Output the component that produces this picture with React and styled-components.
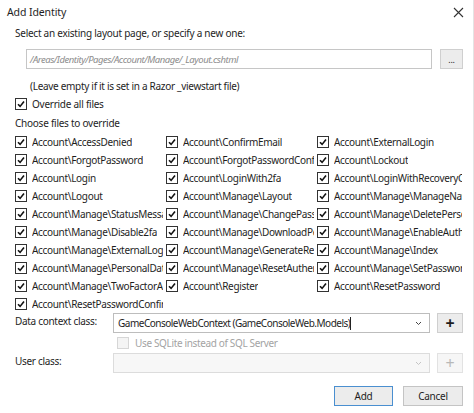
import styled, { createGlobalStyle } from 'styled-components'

const GlobalStyle = createGlobalStyle`
  html, body {
    margin: 0;
    padding: 0;
    background: #ffffff;
  }
  body {
    font-family: "Noto Sans", "Open Sans", sans-serif;
    font-size: 10px;
    letter-spacing: -0.25px;
    color: #1e1e1e;
  }
`

const files = [
  'Account\\AccessDenied', 'Account\\ConfirmEmail', 'Account\\ExternalLogin',
  'Account\\ForgotPassword', 'Account\\ForgotPasswordConfirmation', 'Account\\Lockout',
  'Account\\Login', 'Account\\LoginWith2fa', 'Account\\LoginWithRecoveryCode',
  'Account\\Logout', 'Account\\Manage\\Layout', 'Account\\Manage\\ManageNav',
  'Account\\Manage\\StatusMessage', 'Account\\Manage\\ChangePassword', 'Account\\Manage\\DeletePersonalData',
  'Account\\Manage\\Disable2fa', 'Account\\Manage\\DownloadPersonalData', 'Account\\Manage\\EnableAuthenticator',
  'Account\\Manage\\ExternalLogins', 'Account\\Manage\\GenerateRecoveryCodes', 'Account\\Manage\\Index',
  'Account\\Manage\\PersonalData', 'Account\\Manage\\ResetAuthenticator', 'Account\\Manage\\SetPassword',
  'Account\\Manage\\TwoFactorAuthentication', 'Account\\Register', 'Account\\ResetPassword',
  'Account\\ResetPasswordConfirmation',
]

function CheckBox({ checked, disabled }) {
  return (
    <Box $disabled={disabled}>
      {checked && (
        <svg width="10" height="10" viewBox="0 0 10 10">
          <path d="M2 5.2 L4.1 7.4 L8 2.4" fill="none" stroke="#111" strokeWidth="1.6" />
        </svg>
      )}
    </Box>
  )
}

function Chevron({ disabled }) {
  return (
    <svg width="7" height="5" viewBox="0 0 7 5">
      <path d="M1 1 L3.5 3.5 L6 1" fill="none" stroke={disabled ? '#c4c4c4' : '#444'} strokeWidth="1" />
    </svg>
  )
}

export default function App() {
  return (
    <>
      <GlobalStyle />
      <Dialog>
        <TitleBar>
          <Title>Add Identity</Title>
          <svg width="11" height="11" viewBox="0 0 11 11">
            <path d="M1 1 L10 10 M10 1 L1 10" stroke="#333" strokeWidth="1.1" />
          </svg>
        </TitleBar>
        <Body>
          <Label $top={1}>Select an existing layout page, or specify a new one:</Label>
          <InputRow>
            <TextInput>
              <Placeholder>/Areas/Identity/Pages/Account/Manage/_Layout.cshtml</Placeholder>
            </TextInput>
            <SmallButton $width={23}>...</SmallButton>
          </InputRow>
          <Hint>(Leave empty if it is set in a Razor _viewstart file)</Hint>
          <CheckRow $top={2}>
            <CheckBox checked />
            <span>Override all files</span>
          </CheckRow>
          <Label $top={3}>Choose files to override</Label>
          <FileGrid>
            {files.map((f) => (
              <FileItem key={f}>
                <CheckBox checked />
                <FileName>{f}</FileName>
              </FileItem>
            ))}
          </FileGrid>
          <FieldRow>
            <FieldLabel>Data context class:</FieldLabel>
            <Select>
              <SelectText>
                GameConsoleWebContext (GameConsoleWeb.Models)<Caret />
              </SelectText>
              <Chevron />
            </Select>
            <SmallButton $width={26} $bold>+</SmallButton>
          </FieldRow>
          <SqliteRow>
            <CheckBox disabled />
            <span>Use SQLite instead of SQL Server</span>
          </SqliteRow>
          <FieldRow $top={2}>
            <FieldLabel>User class:</FieldLabel>
            <Select $disabled>
              <SelectText />
              <Chevron disabled />
            </Select>
            <SmallButton $width={26} $bold $disabled>+</SmallButton>
          </FieldRow>
          <Footer>
            <DialogButton $primary>Add</DialogButton>
            <DialogButton>Cancel</DialogButton>
          </Footer>
        </Body>
      </Dialog>
    </>
  )
}

const Dialog = styled.div`
  width: 474px;
  height: 413px;
  box-sizing: border-box;
  border-right: 1px solid #e4e4e4;
  background: #fff;
  overflow: hidden;
`

const TitleBar = styled.div`
  height: 24px;
  display: flex;
  align-items: center;
  justify-content: space-between;
  padding: 0 9px 0 7px;
`

const Title = styled.span`
  font-size: 10.5px;
  letter-spacing: -0.1px;
  color: #1e1e1e;
`

const Body = styled.div`
  padding: 0 10px 0 15px;
`

const Label = styled.div`
  line-height: 16px;
  margin-top: ${(p) => p.$top || 0}px;
`

const InputRow = styled.div`
  display: flex;
  gap: 8px;
  margin-top: 8px;
  padding-left: 11px;
  height: 20px;
`

const TextInput = styled.div`
  flex: 1;
  border: 1px solid #c6c6c6;
  display: flex;
  align-items: center;
  padding-left: 3px;
`

const Placeholder = styled.span`
  font-style: italic;
  font-size: 9.5px;
  color: #8c8c8c;
  letter-spacing: -0.45px;
`

const SmallButton = styled.div`
  width: ${(p) => p.$width}px;
  box-sizing: border-box;
  height: 20px;
  border: 1px solid ${(p) => (p.$disabled ? '#e2e2e2' : '#cfcfcf')};
  background: ${(p) => (p.$disabled ? '#f6f6f6' : '#ececec')};
  color: ${(p) => (p.$disabled ? '#b8b8b8' : '#1e1e1e')};
  display: flex;
  align-items: center;
  justify-content: center;
  font-size: ${(p) => (p.$bold ? '16px' : '9px')};
  font-weight: ${(p) => (p.$bold && !p.$disabled ? 700 : 400)};
`

const Hint = styled.div`
  line-height: 16px;
  margin-top: 9px;
  padding-left: 15px;
  letter-spacing: -0.3px;
`

const CheckRow = styled.div`
  display: flex;
  align-items: center;
  gap: 5px;
  height: 16px;
  margin-top: ${(p) => p.$top || 0}px;
`

const Box = styled.span`
  width: 12px;
  height: 12px;
  box-sizing: border-box;
  flex: none;
  border: 1px solid ${(p) => (p.$disabled ? '#d6d6d6' : '#333')};
  background: ${(p) => (p.$disabled ? '#f4f4f4' : '#fff')};
  display: flex;
  align-items: center;
  justify-content: center;
`

const FileGrid = styled.div`
  display: grid;
  grid-template-columns: 151px 151px 148px;
  grid-auto-rows: 18px;
  margin-top: 2px;
`

const FileItem = styled.div`
  display: flex;
  align-items: center;
  gap: 5px;
  overflow: hidden;
  padding-right: 3px;
`

const FileName = styled.span`
  white-space: nowrap;
  overflow: hidden;
  letter-spacing: -0.32px;
`

const FieldRow = styled.div`
  display: flex;
  align-items: center;
  gap: 7px;
  height: 20px;
  margin-top: ${(p) => p.$top || 0}px;
`

const FieldLabel = styled.span`
  width: 91px;
  flex: none;
  align-self: flex-start;
  line-height: 16px;
  white-space: nowrap;
  letter-spacing: -0.3px;
`

const Select = styled.div`
  flex: 1;
  height: 20px;
  box-sizing: border-box;
  border: 1px solid ${(p) => (p.$disabled ? '#dcdcdc' : '#bdbdbd')};
  background: ${(p) => (p.$disabled ? '#f7f7f7' : '#fff')};
  display: flex;
  align-items: center;
  justify-content: space-between;
  padding: 0 7px 0 4px;
`

const SelectText = styled.span`
  display: flex;
  align-items: center;
  letter-spacing: -0.5px;
`

const Caret = styled.span`
  width: 1px;
  height: 13px;
  background: #222;
`

const SqliteRow = styled.div`
  display: flex;
  align-items: center;
  gap: 6px;
  height: 16px;
  margin-top: 2px;
  padding-left: 102px;
  color: #a3a3a3;
  letter-spacing: -0.35px;
`

const Footer = styled.div`
  display: flex;
  justify-content: flex-end;
  gap: 10px;
  margin-top: 13px;
`

const DialogButton = styled.div`
  width: ${(p) => (p.$primary ? 59 : 60)}px;
  height: 20px;
  box-sizing: border-box;
  border: 1px solid ${(p) => (p.$primary ? '#4a8fd0' : '#c4c4c4')};
  background: #ececec;
  display: flex;
  align-items: center;
  justify-content: center;
`
